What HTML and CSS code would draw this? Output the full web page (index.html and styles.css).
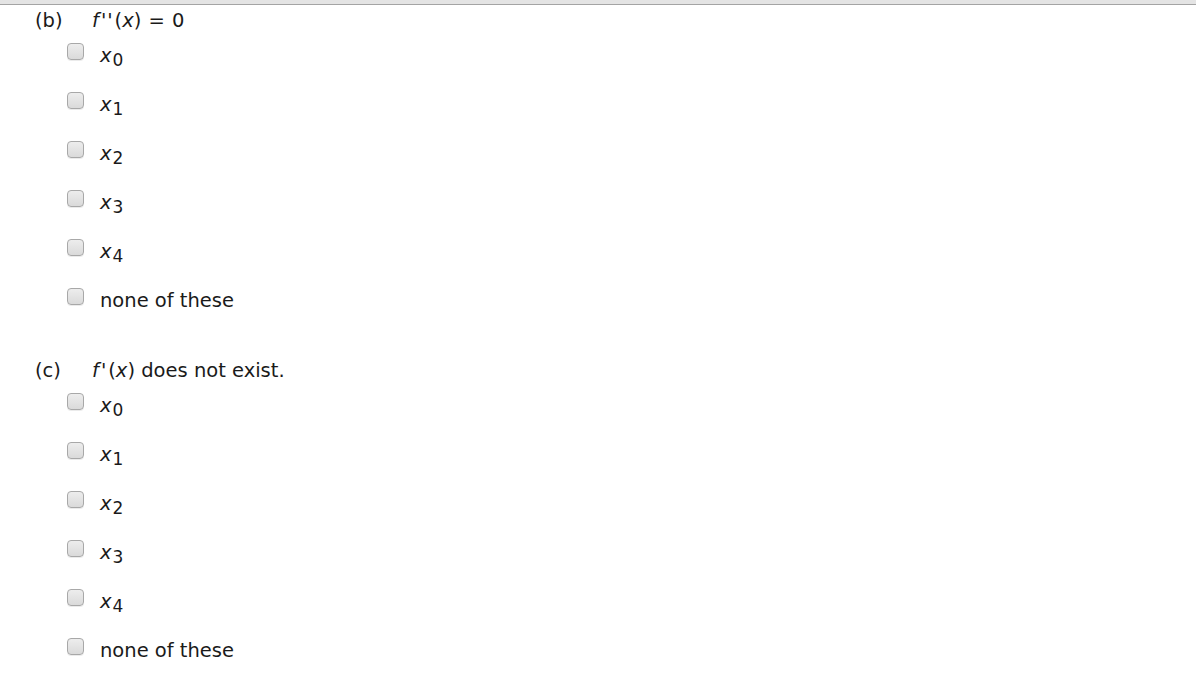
FILE: index.html
```html
<!DOCTYPE html>
<html lang="en">
<head>
<meta charset="utf-8">
<title>Question</title>
<link rel="stylesheet" href="styles.css">
</head>
<body>
<div class="topbar"></div>
<div class="part part-b">
  <div class="part-head"><span class="part-label">(b)</span><span class="part-text"><i>f</i><i class="primes">''</i>(<i>x</i>) <span class="eq">=</span> 0</span></div>
  <ul class="options">
    <li class="option"><span class="box"></span><span class="opt-label"><i>x</i><sub>0</sub></span></li>
    <li class="option"><span class="box"></span><span class="opt-label"><i>x</i><sub>1</sub></span></li>
    <li class="option"><span class="box"></span><span class="opt-label"><i>x</i><sub>2</sub></span></li>
    <li class="option"><span class="box"></span><span class="opt-label"><i>x</i><sub>3</sub></span></li>
    <li class="option"><span class="box"></span><span class="opt-label"><i>x</i><sub>4</sub></span></li>
    <li class="option"><span class="box"></span><span class="opt-label">none of these</span></li>
  </ul>
</div>
<div class="part part-c">
  <div class="part-head"><span class="part-label">(c)</span><span class="part-text"><i>f</i><i class="primes">'</i>(<i>x</i>) does not exist.</span></div>
  <ul class="options">
    <li class="option"><span class="box"></span><span class="opt-label"><i>x</i><sub>0</sub></span></li>
    <li class="option"><span class="box"></span><span class="opt-label"><i>x</i><sub>1</sub></span></li>
    <li class="option"><span class="box"></span><span class="opt-label"><i>x</i><sub>2</sub></span></li>
    <li class="option"><span class="box"></span><span class="opt-label"><i>x</i><sub>3</sub></span></li>
    <li class="option"><span class="box"></span><span class="opt-label"><i>x</i><sub>4</sub></span></li>
    <li class="option"><span class="box"></span><span class="opt-label">none of these</span></li>
  </ul>
</div>
</body>
</html>
```
FILE: styles.css
```css
html, body {
  margin: 0;
  padding: 0;
  background: #ffffff;
}
body {
  font-family: "DejaVu Sans", Verdana, sans-serif;
  font-size: 19.5px;
  color: #1a1a1a;
}
.topbar {
  height: 4px;
  background: #e4e4e4;
  border-bottom: 1px solid #a4a4a4;
}
.part {
  padding-left: 35px;
}
.part-b {
  margin-top: 5px;
}
.part-c {
  margin-top: 34px;
}
.part-head {
  display: flex;
  line-height: 22px;
  height: 22px;
}
.part-label {
  width: 57px;
}
.primes {
  margin-left: 2px;
  margin-right: 1px;
  letter-spacing: 1px;
}
.eq {
  margin: 0 1px 0 1px;
}
.options {
  list-style: none;
  margin: 0;
  padding: 0 0 0 32px;
}
.option {
  display: flex;
  align-items: flex-start;
  height: 49px;
}
.box {
  box-sizing: border-box;
  width: 17px;
  height: 17px;
  margin-top: 11px;
  border: 1px solid #a8a8a8;
  border-radius: 4px;
  background: linear-gradient(#ededed, #dadada);
  box-shadow: 0 1px 0 rgba(0, 0, 0, 0.08);
}
.opt-label {
  margin-top: 12px;
  margin-left: 16px;
  line-height: 24px;
}
.opt-label sub {
  font-size: 17px;
  vertical-align: -4px;
  line-height: 0;
  margin-left: 1px;
}
```
